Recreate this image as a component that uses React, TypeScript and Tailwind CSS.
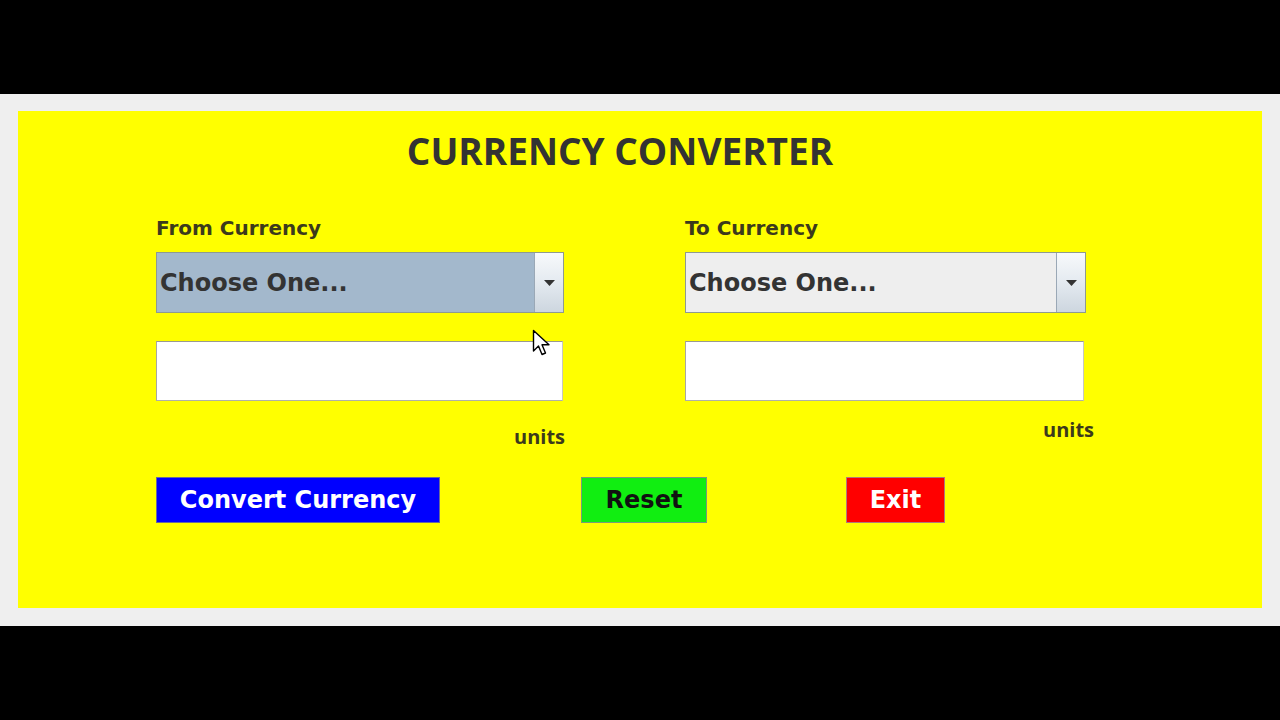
const dejavu = { fontFamily: '"DejaVu Sans", Tahoma, sans-serif' }
const open = { fontFamily: '"Open Sans", "Noto Sans", sans-serif' }

function Combo({ selected, width }: { selected?: boolean; width: string }) {
  return (
    <div
      className={`flex h-[61px] border border-[#8e9a90] ${width} ${selected ? 'bg-[#a3b8cc]' : 'bg-[#eeeeee]'}`}
    >
      <div className="flex flex-1 items-center pl-[3px] text-[24px] font-bold text-[#333333]">Choose One...</div>
      <div className="flex w-[29px] items-center justify-center border-l border-[#9aa8b6] bg-gradient-to-b from-[#f7f9fb] via-[#e4eaf0] to-[#cdd6df]">
        <svg width="11" height="6" viewBox="0 0 11 6">
          <path d="M0 0 L11 0 L5.5 6 Z" fill="#333333" />
        </svg>
      </div>
    </div>
  )
}

function Field({ width }: { width: string }) {
  return (
    <div
      className={`h-[60px] bg-white border border-t-[#9a9a90] border-l-[#a8a8a0] border-r-[#c8c8c0] border-b-[#b0b0a8] ${width}`}
    />
  )
}

export default function App() {
  return (
    <div className="flex h-[720px] w-[1280px] flex-col bg-black" style={dejavu}>
      <div className="h-[94px]" />
      <div className="h-[532px] bg-[#efefef] px-[18px] pt-[17px]">
        <div className="relative h-[497px] bg-[#ffff00] pt-[18px]">
          <h1 className="pr-[40px] text-center text-[37px] font-bold leading-[44px] text-[#333333]" style={open}>
            CURRENCY CONVERTER
          </h1>

          <div className="mt-[43px] flex pl-[138px]">
            {/* From */}
            <div className="flex w-[409px] flex-col">
              <div className="h-[24px] text-[20px] font-bold leading-[24px] text-[#3c3a1c]">From Currency</div>
              <div className="mt-[12px]">
                <Combo selected width="w-[408px]" />
              </div>
              <div className="mt-[28px]">
                <Field width="w-[407px]" />
              </div>
              <div className="mt-[24px] h-[24px] text-right text-[20px] font-bold leading-[24px] text-[#3c3a1c]" style={open}>
                units
              </div>
            </div>

            {/* To */}
            <div className="ml-[120px] flex w-[409px] flex-col">
              <div className="h-[24px] text-[20px] font-bold leading-[24px] text-[#3c3a1c]">To Currency</div>
              <div className="mt-[12px]">
                <Combo width="w-[401px]" />
              </div>
              <div className="mt-[28px]">
                <Field width="w-[399px]" />
              </div>
              <div className="mt-[17px] h-[24px] text-right text-[20px] font-bold leading-[24px] text-[#3c3a1c]" style={open}>
                units
              </div>
            </div>
          </div>

          <div className="mt-[28px] flex pl-[138px] text-[24px] font-bold">
            <button className="flex h-[46px] w-[284px] items-center justify-center border border-[#6a6a9a] bg-[#0000ff] text-white">
              Convert Currency
            </button>
            <button className="ml-[141px] flex h-[46px] w-[126px] items-center justify-center border border-[#7a9a7a] bg-[#11ee11] text-[#111111]">
              Reset
            </button>
            <button className="ml-[139px] flex h-[46px] w-[99px] items-center justify-center border border-[#b07a7a] bg-[#ff0000] text-white">
              Exit
            </button>
          </div>

          {/* mouse pointer */}
          <svg className="absolute left-[514px] top-[218px]" width="20" height="28" viewBox="0 0 20 28">
            <path d="M1.5 1.5 L1.5 22 L6.5 17 L10 25.5 L13.5 24 L10 15.8 L17 15.8 Z" fill="#ffffff" stroke="#000000" strokeWidth="1.4" strokeLinejoin="round" />
          </svg>
        </div>
      </div>
      <div className="flex-1 bg-black" />
    </div>
  )
}
